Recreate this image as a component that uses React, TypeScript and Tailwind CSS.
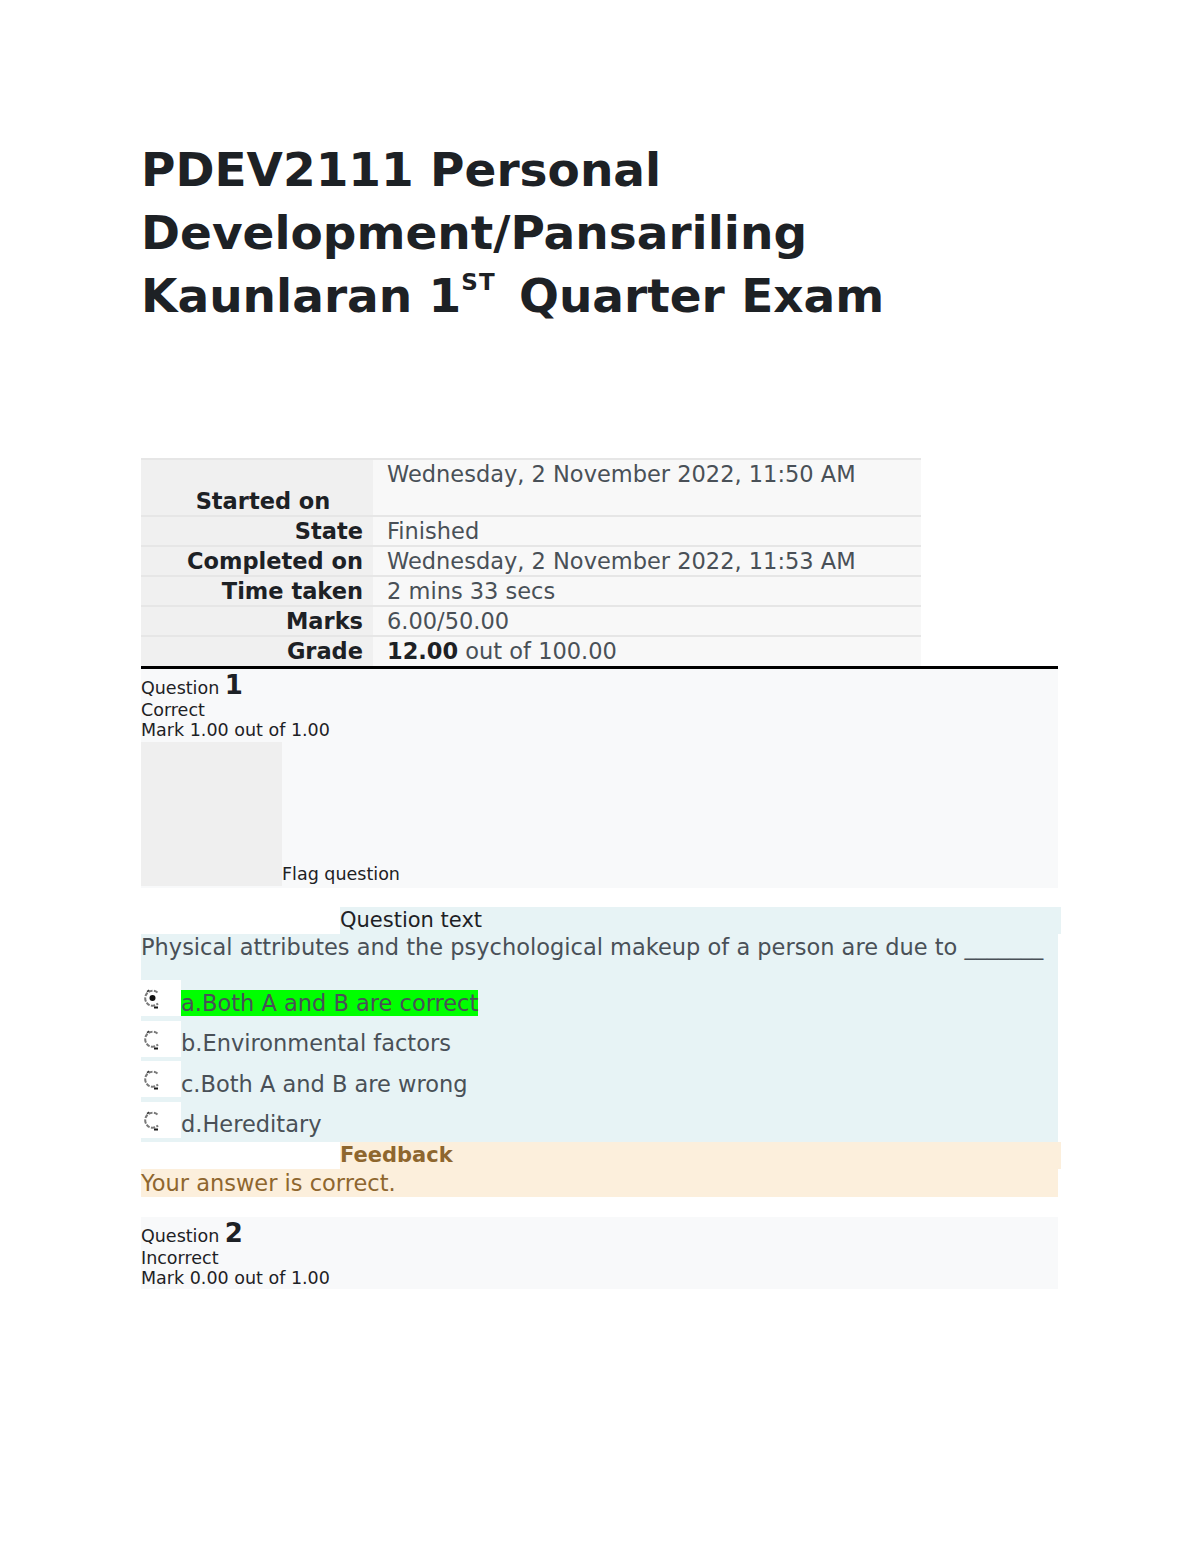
const rows: { label: string; value: React.ReactNode }[] = [
  { label: "State", value: "Finished" },
  { label: "Completed on", value: "Wednesday, 2 November 2022, 11:53 AM" },
  { label: "Time taken", value: "2 mins 33 secs" },
  { label: "Marks", value: "6.00/50.00" },
];

const options = [
  { text: "a.Both A and B are correct", checked: true },
  { text: "b.Environmental factors", checked: false },
  { text: "c.Both A and B are wrong", checked: false },
  { text: "d.Hereditary", checked: false },
];

function Radio({ checked }: { checked: boolean }) {
  return (
    <svg width="22" height="24" viewBox="0 0 22 24" className="ml-[2px] mt-[8px]">
      <path d="M14.5 4.5 A7.5 7.5 0 1 0 15 15.5" fill="none" stroke="#7a7a7a" strokeWidth="2" strokeDasharray="4 1.3" />
      <path d="M4 3.6 l2.2 -1.4" stroke="#333" strokeWidth="1.6" />
      <path d="M11 19.5 h4" stroke="#1a1a1a" strokeWidth="2" />
      {checked && <circle cx="9.5" cy="10" r="3" fill="#111" />}
    </svg>
  );
}

function QuestionInfo({ num, state, mark, children }: { num: string; state: string; mark: string; children?: React.ReactNode }) {
  return (
    <div className="w-[917px] bg-[#f8f9fa] pt-[4px] text-[17.5px] text-[#1d2125]">
      <div className="leading-[24px]">
        Question <span className="text-[26px] font-bold">{num}</span>
      </div>
      <div className="leading-[20px]">{state}</div>
      <div className="leading-[20px]">{mark}</div>
      {children}
    </div>
  );
}

export default function App() {
  return (
    <div className="min-h-[1553px] bg-white font-['DejaVu_Sans',sans-serif] text-[#1d2125]">
      <div className="pl-[141px] pt-[138px]">
        <h1 className="text-[47px] font-bold leading-[63px]">
          PDEV2111 Personal
          <br />
          Development/Pansariling
          <br />
          Kaunlaran 1<sup className="top-[-0.95em] mr-[7px] text-[23px] tracking-[1px]">ST</sup> Quarter Exam
        </h1>

        {/* Summary table */}
        <div className="mt-[131px] w-[780px] border-t-2 border-[#e6e6e6] text-[22.5px]">
          <div className="grid h-[57px] grid-cols-[232px_548px] border-b-2 border-[#e6e6e6]">
            <div className="flex items-end justify-center bg-[#f0f0f0] pl-[12px] font-bold leading-[28px]">Started on</div>
            <div className="bg-[#f8f8f8] pl-[14px] leading-[28px] text-[#495057]">Wednesday, 2 November 2022, 11:50 AM</div>
          </div>
          {rows.map((r) => (
            <div key={r.label} className="grid h-[30px] grid-cols-[232px_548px] border-b-2 border-[#e6e6e6]">
              <div className="bg-[#f0f0f0] pr-[10px] text-right font-bold leading-[28px]">{r.label}</div>
              <div className="bg-[#f8f8f8] pl-[14px] leading-[28px] text-[#495057]">{r.value}</div>
            </div>
          ))}
          <div className="grid h-[29px] grid-cols-[232px_548px]">
            <div className="bg-[#f0f0f0] pr-[10px] text-right font-bold leading-[28px]">Grade</div>
            <div className="bg-[#f8f8f8] pl-[14px] leading-[28px] text-[#495057]">
              <span className="font-bold text-[#1d2125]">12.00</span> out of 100.00
            </div>
          </div>
        </div>
        <div className="h-[3px] w-[917px] bg-black" />

        {/* Question 1 */}
        <QuestionInfo num="1" state="Correct" mark="Mark 1.00 out of 1.00">
          <div className="mt-[2px] flex pb-[2px]">
            <div className="h-[144px] w-[141px] bg-[#efefef]" />
            <div className="self-end pb-[2px] leading-[20px]">Flag question</div>
          </div>
        </QuestionInfo>

        {/* Question text */}
        <div className="mt-[19px] w-[920px]">
          <div className="flex h-[27px]">
            <div className="w-[199px] bg-white" />
            <div className="flex-1 bg-[#e7f3f5] text-[21px] leading-[27px] text-[#1d2125]">Question text</div>
          </div>
          <div className="w-[917px] bg-[#e7f3f5] text-[22.5px] text-[#495057]">
            <div className="leading-[27px]">Physical attributes and the psychological makeup of a person are due to _______</div>
            <div className="h-[19px]" />
            {options.map((o) => (
              <div key={o.text} className="flex h-[40.5px]">
                <div className="h-[36px] w-[40px] bg-white">
                  <Radio checked={o.checked} />
                </div>
                <div className="self-end">
                  <span className={`inline-block leading-[26px] ${o.checked ? "bg-[#00ff00]" : ""}`}>{o.text}</span>
                </div>
              </div>
            ))}
          </div>
        </div>

        {/* Feedback */}
        <div className="w-[920px] text-[#8e662e]">
          <div className="flex h-[27px]">
            <div className="w-[199px] bg-white" />
            <div className="flex-1 bg-[#fcefdc] text-[21px] font-bold leading-[27px]">Feedback</div>
          </div>
          <div className="w-[917px] bg-[#fcefdc] text-[22.5px] leading-[28px]">Your answer is correct.</div>
        </div>

        {/* Question 2 */}
        <div className="mt-[20px]">
          <QuestionInfo num="2" state="Incorrect" mark="Mark 0.00 out of 1.00">
            <div className="h-[1px]" />
          </QuestionInfo>
        </div>
      </div>
    </div>
  );
}
